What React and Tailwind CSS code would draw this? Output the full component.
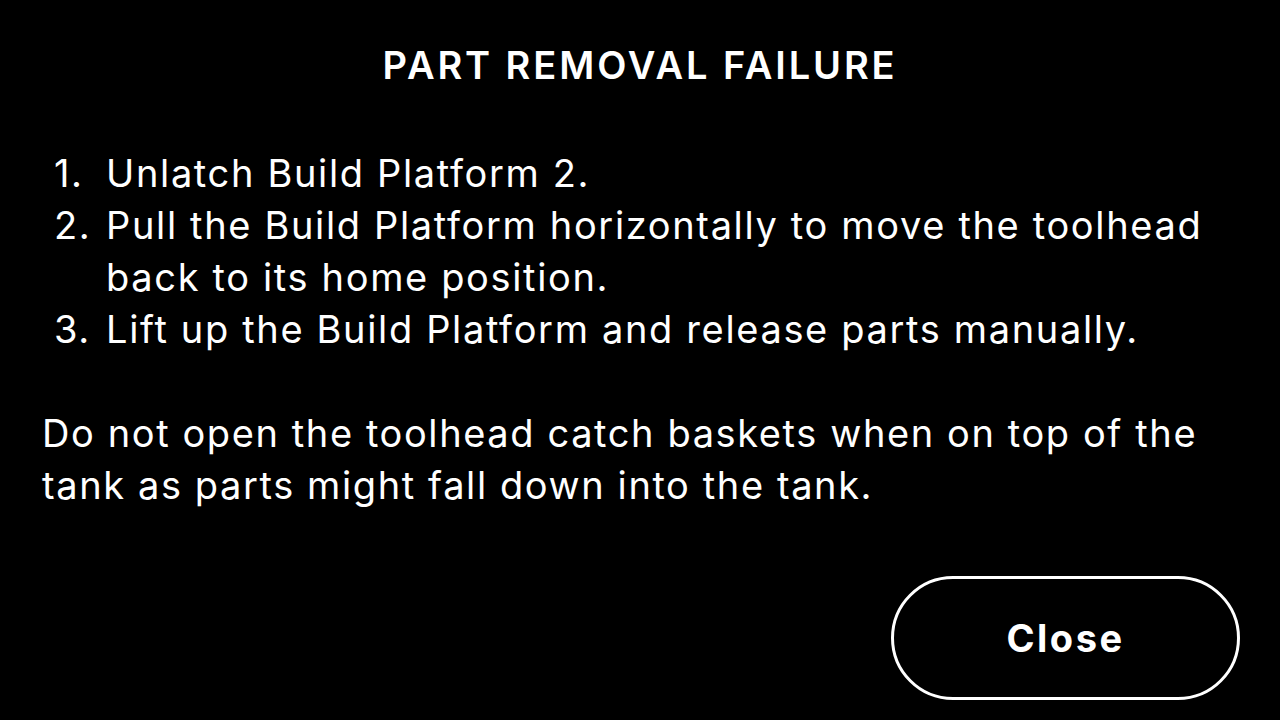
export default function App() {
  const font = { fontFamily: 'Inter, "Noto Sans", sans-serif' };
  const items = [
    ["1.", <>Unlatch Build Platform 2.</>],
    ["2.", <>Pull the Build Platform horizontally to move the toolhead<br />back to its home position.</>],
    ["3.", <>Lift up the Build Platform and release parts manually.</>],
  ];
  return (
    <div className="w-[1280px] h-[720px] bg-black text-white flex flex-col overflow-hidden" style={font}>
      <h1 className="text-center text-[38px] leading-[52px] font-semibold tracking-[2.9px] mt-[39px]">PART REMOVAL FAILURE</h1>
      <div className="mt-[56px] pl-[54px] flex flex-col text-[38px] leading-[52px] tracking-[1.65px]">
        {items.map(([n, t]) => (
          <div key={n} className="flex">
            <div className="w-[52px] shrink-0">{n}</div>
            <div className="whitespace-nowrap">{t}</div>
          </div>
        ))}
      </div>
      <p className="mt-[52px] px-[42px] text-[38px] leading-[52px] tracking-[1.6px] whitespace-nowrap">
        Do not open the toolhead catch baskets when on top of the<br />tank as parts might fall down into the tank.
      </p>
      <div className="flex-1" />
      <div className="flex justify-end pr-[40px] pb-[20px]">
        <button className="w-[349px] h-[124px] rounded-full border-[3px] border-white text-[38px] font-bold tracking-[2.5px]">Close</button>
      </div>
    </div>
  );
}
